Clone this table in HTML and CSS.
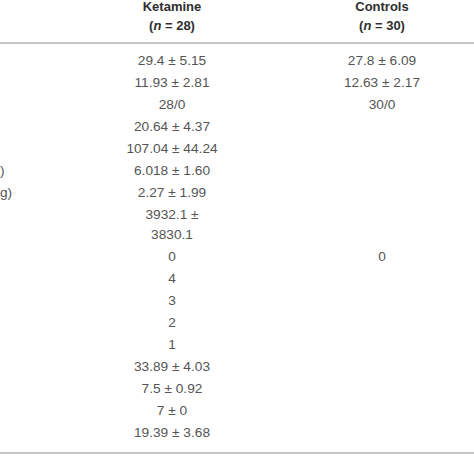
FILE: index.html
```html
<!DOCTYPE html>
<html lang="en">
<head>
<meta charset="utf-8">
<title>Ketamine vs Controls</title>
<link rel="stylesheet" href="styles.css">
</head>
<body>
<table class="data">
  <colgroup>
    <col class="c-label">
    <col class="c-ket">
    <col class="c-ctl">
  </colgroup>
  <thead>
    <tr>
      <th class="lbl"></th>
      <th><span class="h1">Ketamine</span><span class="h2">(<i>n</i> = 28)</span></th>
      <th class="ctl"><span class="h1">Controls</span><span class="h2">(<i>n</i> = 30)</span></th>
    </tr>
  </thead>
  <tbody>
    <tr><td class="lbl"></td><td>29.4 ± 5.15</td><td class="ctl">27.8 ± 6.09</td></tr>
    <tr><td class="lbl"></td><td>11.93 ± 2.81</td><td class="ctl">12.63 ± 2.17</td></tr>
    <tr><td class="lbl"></td><td>28/0</td><td class="ctl">30/0</td></tr>
    <tr><td class="lbl"></td><td>20.64 ± 4.37</td><td class="ctl"></td></tr>
    <tr><td class="lbl"></td><td>107.04 ± 44.24</td><td class="ctl"></td></tr>
    <tr><td class="lbl">)</td><td>6.018 ± 1.60</td><td class="ctl"></td></tr>
    <tr><td class="lbl">g)</td><td>2.27 ± 1.99</td><td class="ctl"></td></tr>
    <tr><td class="lbl"></td><td>3932.1 ± 3830.1</td><td class="ctl"></td></tr>
    <tr><td class="lbl"></td><td>0</td><td class="ctl">0</td></tr>
    <tr><td class="lbl"></td><td>4</td><td class="ctl"></td></tr>
    <tr><td class="lbl"></td><td>3</td><td class="ctl"></td></tr>
    <tr><td class="lbl"></td><td>2</td><td class="ctl"></td></tr>
    <tr><td class="lbl"></td><td>1</td><td class="ctl"></td></tr>
    <tr><td class="lbl"></td><td>33.89 ± 4.03</td><td class="ctl"></td></tr>
    <tr><td class="lbl"></td><td>7.5 ± 0.92</td><td class="ctl"></td></tr>
    <tr><td class="lbl"></td><td>7 ± 0</td><td class="ctl"></td></tr>
    <tr><td class="lbl"></td><td>19.39 ± 3.68</td><td class="ctl"></td></tr>
  </tbody>
</table>
</body>
</html>
```

FILE: styles.css
```css
html, body {
  margin: 0;
  padding: 0;
  background: #ffffff;
}

body {
  width: 474px;
  height: 474px;
  overflow: hidden;
  font-family: "Liberation Sans", Arial, Helvetica, sans-serif;
}

.data {
  border-collapse: collapse;
  table-layout: fixed;
  width: 474px;
}

.c-label { width: 124px; }
.c-ket { width: 96px; }
.c-ctl { width: 254px; }

.data th {
  font-size: 13px;
  font-weight: bold;
  color: #2e2e2e;
  text-align: center;
  padding: 0 0 6.5px;
  border-bottom: 2px solid #c6c6c6;
  vertical-align: top;
}

.h1 {
  display: block;
  line-height: 13px;
}

.h2 {
  display: block;
  line-height: 19.5px;
  margin-top: 3px;
}

.data td {
  font-size: 13.7px;
  line-height: 20px;
  color: #555555;
  text-align: center;
  padding: 1px 0;
  vertical-align: top;
}

.data .ctl {
  padding-left: 70px;
}

.data .lbl {
  text-align: left;
  white-space: nowrap;
}

.data tbody tr:first-child td {
  padding-top: 7px;
}

.data tbody tr:last-child td {
  padding-bottom: 9px;
  border-bottom: 2px solid #c6c6c6;
}
```
